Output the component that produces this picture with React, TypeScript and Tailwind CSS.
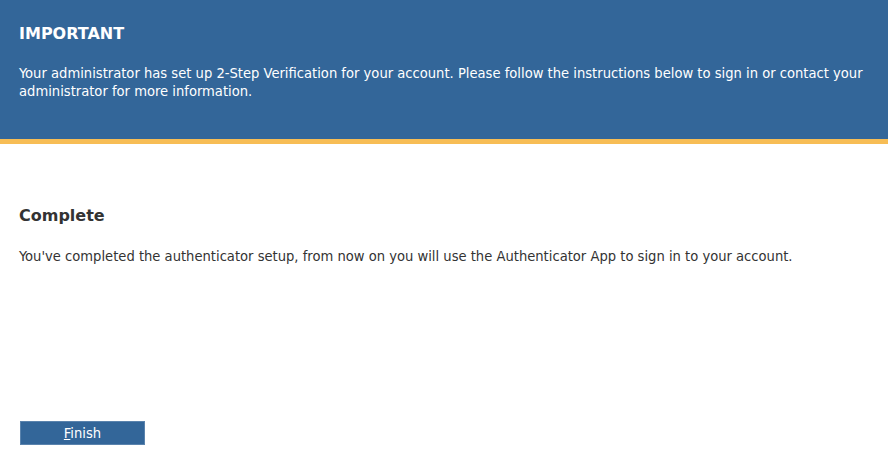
export default function App() {
  const cond = { fontFamily: '"DejaVu Sans Condensed", "DejaVu Sans", sans-serif' };
  const wide = { fontFamily: '"DejaVu Sans", sans-serif' };
  return (
    <div className="w-[888px] h-[450px] bg-white flex flex-col" style={cond}>
      <div className="h-[139px] bg-[#336699] text-white pl-[19px] pr-[12px] pt-[24px]">
        <div className="text-[16px] font-bold leading-[20px]" style={wide}>IMPORTANT</div>
        <p className="mt-[20px] text-[14.6px] leading-[18px]">
          Your administrator has set up 2-Step Verification for your account. Please follow the instructions below to sign in or contact your administrator for more information.
        </p>
      </div>
      <div className="h-[5px] bg-[#f7bd55]" />
      <div className="flex-1 flex flex-col pl-[19px] pr-[12px] pt-[62px] text-[#333]">
        <h2 className="text-[16px] font-bold leading-[20px]" style={wide}>Complete</h2>
        <p className="mt-[21px] text-[14.6px] leading-[18px]">
          You've completed the authenticator setup, from now on you will use the Authenticator App to sign in to your account.
        </p>
        <div className="mt-auto mb-[5px]">
          <button className="w-[125px] h-[24px] ml-[1px] bg-[#336699] text-white text-[14.6px] leading-[22px] border border-[#5a83ad]">
            <span className="underline">F</span>inish
          </button>
        </div>
      </div>
    </div>
  );
}
